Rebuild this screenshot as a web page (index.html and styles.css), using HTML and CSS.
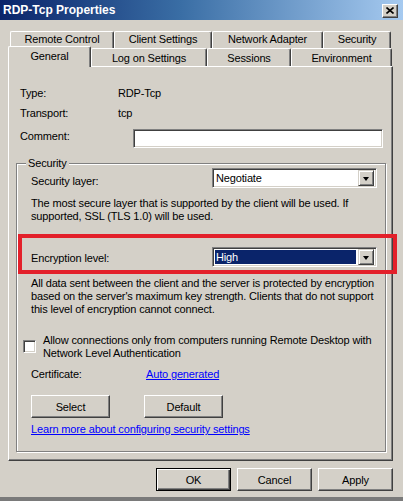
FILE: index.html
```html
<!DOCTYPE html>
<html>
<head>
<meta charset="utf-8">
<link rel="stylesheet" href="styles.css">
</head>
<body>
<div class="window">
  <div class="titlebar">
    <span class="title">RDP-Tcp Properties</span>
    <span class="close"><svg width="8" height="7" viewBox="0 0 8 7"><path d="M0.5 0.5 L7.5 6.5 M7.5 0.5 L0.5 6.5" stroke="#000" stroke-width="1.6" fill="none"/></svg></span>
  </div>
  <div class="tabs">
    <div class="tabrow back">
      <div class="tab t-rc">Remote Control</div>
      <div class="tab t-cs">Client Settings</div>
      <div class="tab t-na">Network Adapter</div>
      <div class="tab t-se">Security</div>
    </div>
    <div class="tabrow front">
      <div class="tab active t-ge">General</div>
      <div class="tab t-lo">Log on Settings</div>
      <div class="tab t-ss">Sessions</div>
      <div class="tab t-en">Environment</div>
    </div>
  </div>
  <div class="panel">
    <div class="info-row"><span class="lbl">Type:</span><span>RDP-Tcp</span></div>
    <div class="info-row"><span class="lbl">Transport:</span><span>tcp</span></div>
    <div class="info-row comment-row"><span class="lbl">Comment:</span><span class="textbox"></span></div>
    <div class="group">
      <span class="group-title">Security</span>
      <div class="combo-row sec-row">
        <span class="combo-lbl">Security layer:</span>
        <div class="combo"><span class="combo-text">Negotiate</span><span class="combo-btn"><span class="arrow"></span></span></div>
      </div>
      <p class="desc desc1">The most secure layer that is supported by the client will be used. If<br>supported, SSL (TLS 1.0) will be used.</p>
      <div class="combo-row enc-row">
        <span class="combo-lbl">Encryption level:</span>
        <div class="combo"><span class="combo-text selected">High</span><span class="combo-btn"><span class="arrow"></span></span></div>
      </div>
      <p class="desc desc2">All data sent between the client and the server is protected by encryption<br>based on the server's maximum key strength. Clients that do not support<br>this level of encryption cannot connect.</p>
      <div class="check-row">
        <span class="checkbox"></span>
        <span class="check-text">Allow connections only from computers running Remote Desktop with<br>Network Level Authentication</span>
      </div>
      <div class="cert-row"><span class="cert-lbl">Certificate:</span><a class="link">Auto generated</a></div>
      <div class="cert-buttons">
        <span class="btn small">Select</span>
        <span class="btn small">Default</span>
      </div>
      <a class="link learn">Learn more about configuring security settings</a>
    </div>
  </div>
  <div class="actions">
    <span class="btn default">OK</span>
    <span class="btn">Cancel</span>
    <span class="btn">Apply</span>
  </div>
  <div class="frame-bottom"></div>
</div>
</body>
</html>
```
FILE: styles.css
```css
* { box-sizing: border-box; }
html, body { margin: 0; padding: 0; }
body {
  width: 403px;
  height: 501px;
  overflow: hidden;
  background: #d4d0c8;
  font-family: "Liberation Sans", Arial, sans-serif;
  font-size: 11px;
  letter-spacing: -0.15px;
  color: #000;
}
.window {
  position: relative;
  width: 403px;
  height: 501px;
  display: flex;
  flex-direction: column;
  background: #d4d0c8;
}
.titlebar {
  height: 20px;
  flex: none;
  display: flex;
  align-items: center;
  padding: 0 5px 0 3px;
  background: linear-gradient(to right, #0a246a 0%, #3a6ea5 45%, #a6caf0 100%);
  color: #fff;
  font-weight: bold;
  font-size: 12px;
  letter-spacing: 0;
}
.close {
  margin-left: auto;
  width: 16px;
  height: 14px;
  background: #d4d0c8;
  border: 1px solid;
  border-color: #fff #404040 #404040 #fff;
  box-shadow: inset -1px -1px #808080;
  display: flex;
  align-items: center;
  justify-content: center;
  margin-top: 1px;
}
.close svg { display: block; margin-left: -1px; }

.tabs { margin-top: 11px; flex: none; }
.tabrow { display: flex; }
.tabrow.back { margin-left: 10px; height: 17px; }
.tabrow.front { margin-left: 8px; height: 18px; }
.tab {
  height: 100%;
  border-top: 1px solid #fff;
  border-left: 1px solid #fff;
  border-right: 1px solid #404040;
  box-shadow: inset -1px 0 #808080;
  border-radius: 2px 2px 0 0;
  text-align: center;
  line-height: 15px;
  background: #d4d0c8;
  white-space: nowrap;
}
.tabrow.front .tab { line-height: 18px; }
.tab.active {
  position: relative;
  z-index: 2;
  height: 21px;
  margin-top: -2px;
  line-height: 15px;
}
.t-rc { width: 104px; }
.t-cs { width: 98px; }
.t-na { width: 111px; }
.t-se { width: 68px; }
.t-ge { width: 83px; }
.t-lo { width: 116px; }
.t-ss { width: 84px; }
.t-en { width: 101px; }

.panel {
  flex: none;
  margin-left: 8px;
  width: 385px;
  height: 395px;
  border-top: 1px solid #fff;
  border-left: 1px solid #fff;
  border-right: 1px solid #404040;
  border-bottom: 1px solid #404040;
  box-shadow: inset -1px -1px #808080;
  padding: 16px 9px 0 11px;
  position: relative;
  z-index: 1;
}
.info-row {
  display: flex;
  align-items: center;
  height: 20px;
}
.lbl { width: 98px; flex: none; }
.comment-row { height: 19px; margin-top: 6px; align-items: flex-start; }
.comment-row .lbl { padding-top: 1px; line-height: 13px; }
.textbox {
  margin-left: auto;
  width: 250px;
  height: 19px;
  background: #fff;
  border: 1px solid;
  border-color: #808080 #fff #fff #808080;
  box-shadow: inset 1px 1px #404040, inset -1px -1px #d4d0c8;
}

.group {
  position: relative;
  margin: 15px -3px 0 -4px;
  border: 1px solid #808080;
  box-shadow: inset 1px 1px #fff, 1px 1px #fff;
  padding: 0 6px 15px 6px;
}
.group-title {
  position: absolute;
  top: -7px;
  left: 9px;
  padding: 0 2px;
  background: #d4d0c8;
  line-height: 13px;
}
.combo-row {
  display: flex;
  margin-left: 8px;
  height: 20px;
}
.combo-lbl { width: 181px; flex: none; line-height: 13px; }
.sec-row { margin-top: 4px; }
.sec-row .combo-lbl { padding-top: 7px; }
.enc-row { margin-top: 24px; position: relative; }
.enc-row .combo-lbl { padding-top: 5px; }
.enc-row::after {
  content: "";
  position: absolute;
  left: -13px;
  right: -18px;
  top: -13px;
  bottom: -7px;
  border: 4px solid #e3202a;
  pointer-events: none;
}
.combo {
  width: 165px;
  height: 20px;
  background: #fff;
  border: 1px solid;
  border-color: #808080 #fff #fff #808080;
  box-shadow: inset 1px 1px #404040, inset -1px -1px #d4d0c8;
  display: flex;
  align-items: stretch;
  padding: 2px;
}
.combo-text {
  flex: 1;
  padding-left: 1px;
  line-height: 14px;
  margin-right: 2px;
}
.combo-text.selected {
  background: #0a246a;
  color: #fff;
}
.combo-btn {
  width: 16px;
  height: 16px;
  margin-top: -1px;
  background: #d4d0c8;
  border: 1px solid;
  border-color: #d4d0c8 #404040 #404040 #d4d0c8;
  box-shadow: inset 1px 1px #fff, inset -1px -1px #808080;
  display: flex;
  align-items: center;
  justify-content: center;
}
.arrow {
  width: 0;
  height: 0;
  border-left: 3.5px solid transparent;
  border-right: 3.5px solid transparent;
  border-top: 4px solid #000;
  margin-top: 1px;
}
.desc {
  margin: 0 0 0 8px;
  line-height: 13px;
  white-space: nowrap;
}
.desc1 { margin-top: 9px; }
.desc2 { margin-top: 10px; }
.check-row {
  display: flex;
  margin-top: 18px;
  line-height: 13px;
  white-space: nowrap;
}
.checkbox {
  flex: none;
  width: 13px;
  height: 13px;
  margin-top: 6px;
  background: #fff;
  border: 1px solid;
  border-color: #808080 #fff #fff #808080;
  box-shadow: inset 1px 1px #404040, inset -1px -1px #d4d0c8;
}
.check-text { margin-left: 7px; }
.cert-row {
  display: flex;
  margin: 8px 0 0 8px;
  line-height: 13px;
}
.cert-lbl { width: 115px; flex: none; }
.link { color: #0000ff; text-decoration: underline; }
.cert-buttons {
  display: flex;
  gap: 34px;
  margin: 14px 0 0 8px;
}
.learn {
  display: block;
  margin: 5px 0 0 8px;
  line-height: 13px;
}
.btn {
  display: flex;
  align-items: center;
  justify-content: center;
  width: 75px;
  height: 23px;
  background: #d4d0c8;
  border: 1px solid;
  border-color: #fff #404040 #404040 #fff;
  box-shadow: inset -1px -1px #808080;
}
.btn.small { width: 79px; }
.btn.default {
  border: 1px solid #000;
  box-shadow: inset 1px 1px #fff, inset -1px -1px #404040, inset -2px -2px #808080;
}
.actions {
  flex: none;
  display: flex;
  justify-content: flex-end;
  gap: 6px;
  margin-top: 7px;
  padding-right: 10px;
}
.frame-bottom {
  margin-top: auto;
  height: 4px;
  flex: none;
  background: #7a7a7a;
}
```
